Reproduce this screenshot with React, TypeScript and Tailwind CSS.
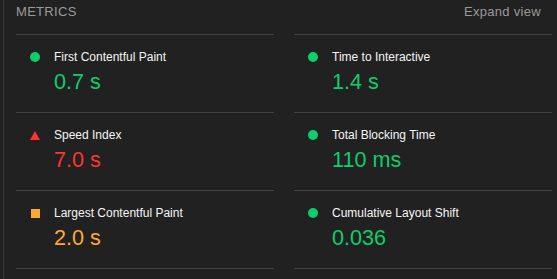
import type { ReactNode } from "react";

type Rating = "pass" | "average" | "fail";

interface Metric {
  label: string;
  value: string;
  rating: Rating;
}

const METRICS: Metric[] = [
  { label: "First Contentful Paint", value: "0.7 s", rating: "pass" },
  { label: "Time to Interactive", value: "1.4 s", rating: "pass" },
  { label: "Speed Index", value: "7.0 s", rating: "fail" },
  { label: "Total Blocking Time", value: "110 ms", rating: "pass" },
  { label: "Largest Contentful Paint", value: "2.0 s", rating: "average" },
  { label: "Cumulative Layout Shift", value: "0.036", rating: "pass" },
];

const VALUE_COLOR: Record<Rating, string> = {
  pass: "text-[#0cce6b]",
  average: "text-[#ffa933]",
  fail: "text-[#ff3333]",
};

function RatingIcon({ rating }: { rating: Rating }): ReactNode {
  if (rating === "fail") {
    return (
      <svg width="10" height="9" viewBox="0 0 10 9" className="block">
        <path d="M5 0 L10 9 L0 9 Z" fill="#ff3333" />
      </svg>
    );
  }
  if (rating === "average") {
    return <span className="block h-[9px] w-[9px] bg-[#ffa933]" />;
  }
  return <span className="block h-[10px] w-[10px] rounded-full bg-[#0cce6b]" />;
}

export default function App() {
  return (
    <div
      className="h-[279px] w-[557px] overflow-hidden bg-[#212121] pl-[3px]"
      style={{ fontFamily: '"Liberation Sans", Arial, sans-serif' }}
    >
      <div className="h-full border-l border-[#3a3a3a] pl-[12px] pr-[5px] pt-[4px]">
        <div className="mb-[14px] flex h-[16px] items-center justify-between text-[13px] leading-[16px] text-[#9a9a9a]">
          <span className="uppercase tracking-[0.3px]">Metrics</span>
          <span className="pr-[11px] tracking-[0.3px]">Expand view</span>
        </div>

        <div className="grid grid-cols-2 gap-x-5">
          {METRICS.map((m, i) => (
            <div
              key={m.label}
              className={`border-b border-[#424242] pl-[14px] pt-[13px] pb-[17px] ${
                i < 2 ? "border-t" : ""
              }`}
            >
              <div className="flex h-[18px] items-center">
                <span className="flex w-[10px] justify-center">
                  <RatingIcon rating={m.rating} />
                </span>
                <span className="ml-[14px] text-[12px] leading-[18px] text-[#f5f5f5]">{m.label}</span>
              </div>
              <div
                className={`mt-[3px] pl-[24px] text-[21.6px] leading-[26px] ${VALUE_COLOR[m.rating]}`}
              >
                {m.value}
              </div>
            </div>
          ))}
        </div>
      </div>
    </div>
  );
}
